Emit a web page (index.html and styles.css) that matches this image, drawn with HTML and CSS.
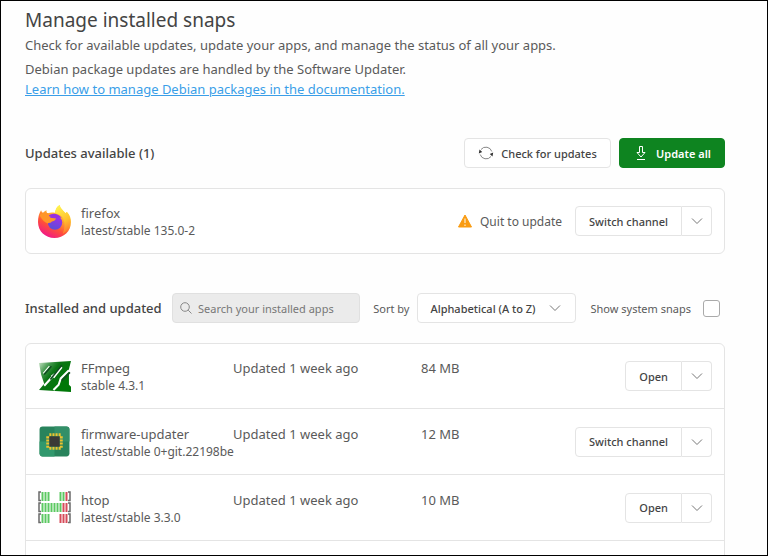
FILE: index.html
```html
<!DOCTYPE html>
<html lang="en">
  <head>
    <meta charset="UTF-8" />
    <title>Manage installed snaps</title>
    <link rel="stylesheet" href="styles.css" />
  </head>
  <body>
    <!-- shared icons -->
    <svg class="icon-defs" aria-hidden="true">
      <symbol id="chevron" viewBox="0 0 12 12">
        <path d="M1 3.5 L6 8.5 L11 3.5" fill="none" stroke="#777" />
      </symbol>
    </svg>

    <main class="page">
      <header class="intro">
        <h1>Manage installed snaps</h1>
        <p>Check for available updates, update your apps, and manage the status of all your apps.</p>
        <p>Debian package updates are handled by the Software Updater.</p>
        <a href="#docs">Learn how to manage Debian packages in the documentation.</a>
      </header>

      <section class="updates">
        <div class="updates-bar">
          <h2>Updates available (1)</h2>
          <button class="btn">
            <svg width="16" height="16" viewBox="0 0 16 16" fill="none" stroke="#888">
              <path d="M3 4.500 A6.200 6.200 0 0 1 13.800 6.500" />
              <path d="M13 11.500 A6.200 6.200 0 0 1 2.200 9.500" />
              <path d="M0.800 8.500 L1.500 4.500 L4.200 7 Z M15.200 7.500 L14.500 11.500 L11.800 9 Z" fill="#333" stroke="none" />
            </svg>
            Check for updates
          </button>
          <button class="btn btn-green">
            <svg width="16" height="16" viewBox="0 0 16 16" fill="none" stroke="#fff">
              <path d="M6.500 1.500 H9.500 V7.500 H12 L8 12 L4 7.500 H6.500 Z" />
              <path d="M4 14.500 H12" />
            </svg>
            Update all
          </button>
        </div>

        <ul class="card">
          <li class="snap">
            <svg class="snap-icon" viewBox="0 0 32 32">
              <defs>
                <linearGradient id="fox" x1="0.8" y1="0.1" x2="0.3" y2="1">
                  <stop offset="0" stop-color="#fff04a" />
                  <stop offset="0.35" stop-color="#ffa62c" />
                  <stop offset="0.65" stop-color="#ff5038" />
                  <stop offset="1" stop-color="#f0148c" />
                </linearGradient>
                <linearGradient id="flame" x1="0.3" y1="0" x2="0.6" y2="1">
                  <stop offset="0" stop-color="#fff44f" />
                  <stop offset="0.6" stop-color="#ffc02c" />
                  <stop offset="1" stop-color="#ff7a30" />
                </linearGradient>
                <linearGradient id="globe" x1="0.7" y1="0" x2="0.3" y2="1">
                  <stop offset="0" stop-color="#a92be8" />
                  <stop offset="1" stop-color="#5550d8" />
                </linearGradient>
              </defs>
              <path d="M3 5 C3.500 6.500 4 7 5 7.600 C6 6 7 5.500 8.300 5 C8 6.700 8.500 7.500 9.500 8 C12 7 14 7 16.500 7.500 C17 4 18.500 1.500 21 0 C21.500 3.500 25 5.500 26.500 8 L28 6.800 C31 9.500 32 13 32 16.500 C32 25.500 25 32 16 32 C7 32 0 25.500 0 16.500 C0 12 1 8 3 5 Z" fill="url(#fox)" />
              <path d="M21 0 C21.500 3.500 25 5.500 26.500 8 L28 6.800 C34 13 31 24 24 28 C26 23 27 16 23 11 C21 8.500 17.500 9 16.500 7.500 C17 4 18.500 1.500 21 0 Z" fill="url(#flame)" />
              <circle cx="16.500" cy="17" r="7" fill="url(#globe)" />
              <path d="M10 11 C12 7.500 19 7 23 12.500 C21 11.500 20 11.800 19 12 L15 12 Z" fill="#9630e0" />
              <path d="M1.500 10 C4 7 7 7.500 9.500 8 C10.500 10 11 11.500 12 12.300 L17.500 13 C17 15 14.500 15.500 13.500 16 C12 18 11.500 16.500 9.500 18 C7 17 4 15 1.500 10 Z" fill="#ff9627" />
            </svg>
            <div class="snap-name">
              <h3>firefox</h3>
              <p>latest/stable 135.0-2</p>
            </div>
            <span class="quit">
              <svg width="14" height="14" viewBox="0 0 14 14">
                <path d="M7 1 L13.500 13 H0.500 Z" fill="#f99b11" stroke="#f99b11" stroke-linejoin="round" />
                <path d="M7 4.500 V9 M7 10.500 V12" stroke="#fde3b8" stroke-width="1.400" />
              </svg>
              Quit to update
            </span>
            <div class="split">
              <button class="split-main">Switch channel</button>
              <button class="split-more" aria-label="More actions">
                <svg width="12" height="12"><use href="#chevron" /></svg>
              </button>
            </div>
          </li>
        </ul>
      </section>

      <section class="installed">
        <div class="filter-bar">
          <h2>Installed and updated</h2>
          <div class="search">
            <svg width="12" height="12" viewBox="0 0 12 12" fill="none" stroke="#888">
              <circle cx="5" cy="5" r="4.300" />
              <path d="M8.200 8.200 L11.500 11.500" />
            </svg>
            <input type="text" placeholder="Search your installed apps" aria-label="Search your installed apps" />
          </div>
          <label for="sort">Sort by</label>
          <div class="sort">
            <select id="sort">
              <option>Alphabetical (A to Z)</option>
            </select>
            <svg width="12" height="12"><use href="#chevron" /></svg>
          </div>
          <label for="system">Show system snaps</label>
          <input type="checkbox" id="system" class="check" />
        </div>

        <ul class="card">
          <li class="snap">
            <svg class="snap-icon" viewBox="0 0 32 32">
              <defs>
                <linearGradient id="ff" x1="0" y1="0.1" x2="0.8" y2="0.7">
                  <stop offset="0" stop-color="#b4d8b4" />
                  <stop offset="0.25" stop-color="#469a50" />
                  <stop offset="0.5" stop-color="#0a7414" />
                  <stop offset="1" stop-color="#007808" />
                </linearGradient>
              </defs>
              <path d="M1 3 L32 1 L30 9 L30 24 L32 26 L32 31 L1 29 L6 23 L3 14 Z" fill="url(#ff)" />
              <g fill="none" stroke="#fff" stroke-width="2" stroke-linejoin="round">
                <path d="M6 25 L16 14 L13 16 M15 17 L23 7" />
                <path d="M15 29 L20 24 L22 18 L30 10" />
                <path d="M5 13 L11 6" stroke-width="1" />
              </g>
              <path d="M6 14 L13 6 M12 19 L23 5 M23 20 L31 12" stroke="#104c20" stroke-width="1.500" />
            </svg>
            <div class="snap-name">
              <h3>FFmpeg</h3>
              <p>stable 4.3.1</p>
            </div>
            <span class="snap-date">Updated 1 week ago</span>
            <span class="snap-size">84 MB</span>
            <div class="split">
              <button class="split-main">Open</button>
              <button class="split-more" aria-label="More actions">
                <svg width="12" height="12"><use href="#chevron" /></svg>
              </button>
            </div>
          </li>

          <li class="snap">
            <svg class="snap-icon" viewBox="0 0 32 32">
              <rect x="1.500" y="1.500" width="29" height="29" rx="3" fill="#28835c" />
              <path d="M16 1.500 H27.500 A3 3 0 0 1 30.500 4.500 V16 H16 Z" fill="#338f68" />
              <path d="M1.500 16 H16 V30.500 H4.500 A3 3 0 0 1 1.500 27.500 Z" fill="#31986d" />
              <path d="M11 9.500 H22 M11 22.500 H22 M9.500 11 V22 M22.500 11 V22" stroke="#edc22e" stroke-width="3" stroke-dasharray="2 1" />
              <rect x="11" y="11" width="10" height="10" fill="#3b3936" />
            </svg>
            <div class="snap-name">
              <h3>firmware-updater</h3>
              <p>latest/stable 0+git.22198be</p>
            </div>
            <span class="snap-date">Updated 1 week ago</span>
            <span class="snap-size">12 MB</span>
            <div class="split">
              <button class="split-main">Switch channel</button>
              <button class="split-more" aria-label="More actions">
                <svg width="12" height="12"><use href="#chevron" /></svg>
              </button>
            </div>
          </li>

          <li class="snap">
            <svg class="snap-icon" viewBox="0 0 33 33" fill="none">
              <g stroke="#6a6a6a" stroke-width="1.500">
                <path d="M3 1 H1 V9.500 H3 M30 1 H32 V9.500 H30" />
                <path d="M3 12 H1 V20.500 H3 M30 12 H32 V20.500 H30" />
                <path d="M3 23 H1 V31.500 H3 M30 23 H32 V31.500 H30" />
              </g>
              <g stroke="#5cc962" stroke-width="2">
                <path d="M4.500 1 V10 M7.500 1 V10 M10.500 1 V10 M22.500 1 V10 M25.500 1 V10" />
                <path d="M4.500 12 V21 M7.500 12 V21 M10.500 12 V21 M13.500 12 V21 M16.500 12 V21 M19.500 12 V21 M22.500 12 V21" />
                <path d="M4.500 23 V32 M7.500 23 V32 M10.500 23 V32" />
              </g>
              <path d="M28.500 1 V10 M25.500 12 V21 M28.500 12 V21 M22.500 23 V32 M25.500 23 V32 M28.500 23 V32" stroke="#d64c5a" stroke-width="2" />
            </svg>
            <div class="snap-name">
              <h3>htop</h3>
              <p>latest/stable 3.3.0</p>
            </div>
            <span class="snap-date">Updated 1 week ago</span>
            <span class="snap-size">10 MB</span>
            <div class="split">
              <button class="split-main">Open</button>
              <button class="split-more" aria-label="More actions">
                <svg width="12" height="12"><use href="#chevron" /></svg>
              </button>
            </div>
          </li>

          <li class="snap"></li>
        </ul>
      </section>
    </main>
  </body>
</html>
```
FILE: styles.css
```css
* {
  box-sizing: border-box;
}
body {
  margin: 0;
  font-family: "Noto Sans", "Open Sans", sans-serif;
  font-size: 12px;
  color: #5a5a5a;
}
h1,
h2,
h3,
p,
ul {
  margin: 0;
  padding: 0;
}
button,
input,
select {
  font: inherit;
  color: inherit;
}
svg {
  flex: none;
}
.icon-defs {
  display: none;
}

/* window, the list runs off the bottom edge */
.page {
  height: 100vh;
  overflow: hidden;
  border: 1px solid #000;
  padding: 6px 42px 0 24px;
  background-color: #fefefe;
}

/* page heading */
.intro {
  font-size: 13px;
}
.intro h1 {
  font-size: 19px;
  font-weight: 400;
  line-height: 26px;
  color: #444;
}
.intro p {
  line-height: 24px;
}
.intro a {
  display: block;
  line-height: 16px;
  color: #3a9ee8;
}
h2 {
  font-size: 13px;
  font-weight: 500;
  color: #444;
}

/* buttons */
.btn,
.split-main,
.split-more {
  height: 30px;
  border: 1px solid #e4e4e4;
  background-color: #fff;
  color: #444;
  font-size: 11px;
  font-weight: 500;
  cursor: pointer;
}
.btn {
  display: flex;
  align-items: center;
  justify-content: center;
  gap: 7px;
  width: 147px;
  padding: 0;
  border-radius: 4px;
}
.btn-green {
  width: 106px;
  border-color: #0e8420;
  background-color: #0e8420;
  color: #fff;
  font-weight: 600;
}
.split {
  display: flex;
  margin-left: auto;
}
.split-main {
  padding: 0 13px;
  border-radius: 4px 0 0 4px;
}
.split-more {
  display: flex;
  align-items: center;
  justify-content: center;
  width: 30px;
  padding: 0;
  border-left: none;
  border-radius: 0 4px 4px 0;
}

/* updates */
.updates-bar {
  display: flex;
  align-items: center;
  gap: 8px;
  margin-top: 41px;
}
.updates-bar h2 {
  flex: 1;
}
.quit {
  display: flex;
  align-items: center;
  gap: 8px;
  margin-left: auto;
  margin-right: 13px;
}
.quit + .split {
  margin-left: 0;
}

/* search, sort and system snaps */
.filter-bar {
  display: grid;
  grid-template-columns: 134px 1fr auto auto auto auto;
  align-items: center;
  margin-top: 39px;
  padding-right: 5px;
  font-size: 11px;
  white-space: nowrap;
}
.search {
  display: flex;
  align-items: center;
  gap: 6px;
  height: 30px;
  margin: 0 13px;
  padding: 0 7px;
  border: 1px solid #e0e0e0;
  border-radius: 4px;
  background-color: #ebebeb;
}
.search input {
  width: 100%;
  min-width: 0;
  padding: 0;
  border: none;
  outline: none;
  background: none;
}
.search input::placeholder {
  color: #777;
}
.sort {
  position: relative;
  width: 159px;
  margin: 0 14px 0 8px;
}
.sort select {
  appearance: none;
  width: 100%;
  height: 30px;
  padding: 0 12px;
  border: 1px solid #e4e4e4;
  border-radius: 4px;
  background-color: #fff;
  color: #444;
  font-weight: 500;
}
.sort svg {
  position: absolute;
  top: 9px;
  right: 15px;
  pointer-events: none;
}
.check {
  appearance: none;
  width: 17px;
  height: 17px;
  margin: 0 0 0 12px;
  border: 1px solid #aaa;
  border-radius: 3px;
  background-color: #fff;
}

/* snap lists */
.card {
  margin-top: 20px;
  border: 1px solid #e4e4e4;
  border-radius: 6px;
  background-color: #fff;
  list-style: none;
}
.snap {
  display: flex;
  align-items: center;
  height: 64px;
  padding: 0 12px;
}
.snap + .snap {
  height: 66px;
  border-top: 1px solid #e4e4e4;
}
.snap-icon {
  width: 33px;
  height: 33px;
}
.snap-name {
  width: 152px;
  margin-left: 10px;
  white-space: nowrap;
}
.snap-name h3 {
  font-size: 13px;
  font-weight: 400;
  line-height: 20px;
}
.snap-name p {
  line-height: 16px;
}
.snap-date,
.snap-size {
  font-size: 13px;
  line-height: 18px;
  margin-bottom: 16px;
}
.snap-date {
  width: 188px;
}
```
